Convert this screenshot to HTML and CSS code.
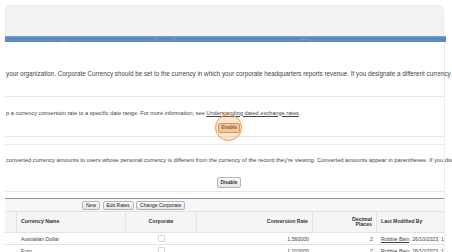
FILE: index.html
```html
<!DOCTYPE html>
<html>
<head>
<meta charset="utf-8">
<link rel="stylesheet" href="styles.css">
</head>
<body>
<div class="page">
  <div class="card-head"></div>
  <div class="band"></div>
  <div class="content">
    <div class="sec sec1">
      <p class="txt t1">your organization. Corporate Currency should be set to the currency in which your corporate headquarters reports revenue. If you designate a different currency</p>
    </div>
    <div class="sec sec2">
      <p class="txt t2">p a currency conversion rate to a specific date range. For more information, see <a class="lnk">Understanding dated exchange rates</a>.</p>
      <div class="btn-row"><span class="btn hl">Enable<span class="ring"></span></span></div>
    </div>
    <div class="sec sec3">
      <p class="txt t3">converted currency amounts to users whose personal currency is different from the currency of the record they're viewing. Converted amounts appear in parentheses. If you dis</p>
      <div class="btn-row"><span class="btn">Disable</span></div>
    </div>
    <div class="list">
      <div class="toolbar">
        <span class="btn">New</span>
        <span class="btn">Edit Rates</span>
        <span class="btn">Change Corporate</span>
      </div>
      <div class="grid head">
        <div class="c c0"></div>
        <div class="c c1">Currency Name</div>
        <div class="c c2">Corporate</div>
        <div class="c c3">Conversion Rate</div>
        <div class="c c4">Decimal<br>Places</div>
        <div class="c c5">Last Modified By</div>
      </div>
      <div class="grid row">
        <div class="c c0"></div>
        <div class="c c1">Australian Dollar</div>
        <div class="c c2"><span class="cb"></span></div>
        <div class="c c3">1.560000</div>
        <div class="c c4">2</div>
        <div class="c c5"><a class="lnk">Robbie Bain</a>, 26/10/2023, 1</div>
      </div>
      <div class="grid row">
        <div class="c c0"></div>
        <div class="c c1">Euro</div>
        <div class="c c2"><span class="cb"></span></div>
        <div class="c c3">1.010000</div>
        <div class="c c4">2</div>
        <div class="c c5"><a class="lnk">Robbie Bain</a>, 26/10/2023, 1</div>
      </div>
    </div>
  </div>
</div>
</body>
</html>
```
FILE: styles.css
```css
html, body {
  margin: 0;
  padding: 0;
  background: #ffffff;
  overflow: hidden;
}
body {
  width: 452px;
  height: 252px;
  font-family: "Liberation Sans", Arial, sans-serif;
  color: #444444;
}
.page {
  padding: 5px 0 0 5px;
}
.card-head {
  width: 437px;
  height: 30px;
  background: #f3f3f3;
  border: 1px solid #ebebeb;
  border-bottom: none;
  border-radius: 5px 5px 0 0;
}
.band {
  width: 441px;
  height: 6px;
  background:
    radial-gradient(circle at 60px 14px, transparent 9px, rgba(255,255,255,0.12) 10px, transparent 11px),
    radial-gradient(circle at 160px -4px, transparent 10px, rgba(255,255,255,0.12) 11px, transparent 12px),
    radial-gradient(circle at 300px 12px, transparent 9px, rgba(255,255,255,0.12) 10px, transparent 11px),
    #5c8ac3;
  border-top: 1px solid #7fa3cf;
  box-sizing: border-box;
}
.content {
  width: 439px;
  border-right: 1px solid #ececec;
}
.txt {
  margin: 0;
  line-height: 7px;
  white-space: nowrap;
  padding-left: 1px;
}
.t1 { font-size: 6.3px; }
.t2 { font-size: 5.65px; }
.t3 { font-size: 5.75px; }
.lnk {
  color: #444444;
  text-decoration: underline;
}
.sec {
  box-sizing: border-box;
}
.sec1 {
  height: 55px;
  padding-top: 27.5px;
  border-bottom: 1px solid #e6e6e6;
}
.sec2 {
  height: 40px;
  padding-top: 12.5px;
  margin-bottom: 7px;
  border-bottom: 1px solid #e6e6e6;
}
.sec3 {
  height: 48px;
  padding-top: 11.5px;
  border-top: 1px solid #ececec;
  border-bottom: 1px solid #e6e6e6;
}
.btn-row {
  display: flex;
  justify-content: center;
  padding-left: 9px;
}
.sec2 .btn-row { margin-top: 6.5px; }
.sec3 .btn-row { margin-top: 13px; }
.btn {
  position: relative;
  display: inline-block;
  font-size: 4.8px;
  font-weight: bold;
  line-height: 8px;
  padding: 0 2px;
  color: #333;
  background: linear-gradient(#fbfbfb, #e4e4e4);
  border: 1px solid #b5b5b5;
  border-radius: 2px;
}
.sec3 .btn { line-height: 9px; }
.btn.hl {
  background: #f5d3b3;
  border-color: #b0947a;
  color: #5a4636;
}
.ring {
  position: absolute;
  left: 50%;
  top: 50%;
  width: 25px;
  height: 25px;
  margin: -14px 0 0 -14px;
  border-radius: 50%;
  border: 1.5px solid #f39a45;
  background: rgba(250, 165, 90, 0.3);
}
.list {
  margin-top: 6px;
  border-top: 1.5px solid #8597ad;
}
.toolbar {
  display: flex;
  gap: 2.5px;
  padding: 1.5px 0 1.5px 77px;
  background: #f7f7f7;
  border-bottom: 1px solid #e3e3e3;
}
.toolbar .btn {
  font-size: 5px;
  line-height: 7px;
  padding: 0 3px;
  font-weight: normal;
  color: #222;
}
.grid {
  display: grid;
  grid-template-columns: 12px 109px 71px 116px 64px 1fr;
  border-bottom: 1px solid #e3e3e3;
}
.head {
  height: 20px;
  background: #f4f5f5;
  font-size: 5.2px;
  font-weight: bold;
  color: #333;
}
.head .c {
  border-right: 1px solid #e3e3e3;
  display: flex;
  align-items: center;
  line-height: 5.5px;
}
.head .c5 { border-right: none; }
.row {
  height: 11px;
  font-size: 5.2px;
}
.row .c {
  display: flex;
  align-items: center;
}
.c1 { padding-left: 4px; }
.c2 { justify-content: center; }
.c3 { justify-content: flex-end; padding-right: 4px; text-align: right; }
.c4 { justify-content: flex-end; padding-right: 4px; text-align: right; }
.c5 { padding-left: 4px; white-space: nowrap; }
.cb {
  width: 5px;
  height: 5px;
  border: 1px solid #d8d8d8;
  border-radius: 1px;
  background: #fff;
}
```
